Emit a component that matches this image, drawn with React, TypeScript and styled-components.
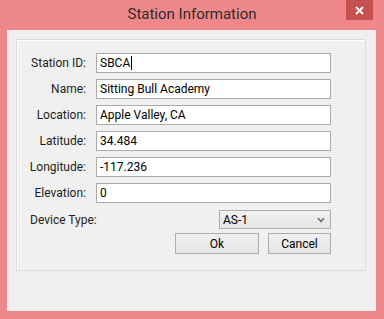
import React from 'react';
import styled, { createGlobalStyle } from 'styled-components';

const GlobalStyle = createGlobalStyle`
  html, body {
    margin: 0;
    padding: 0;
  }
  body {
    width: 384px;
    height: 319px;
    overflow: hidden;
    font-family: Roboto, "Noto Sans", sans-serif;
  }
`;

const Window = styled.div`
  width: 384px;
  height: 319px;
  box-sizing: border-box;
  background-color: #ef888b;
  display: flex;
  flex-direction: column;
`;

const TitleBar = styled.div`
  height: 30px;
  display: grid;
  grid-template-columns: 1fr auto 1fr;
  align-items: start;
`;

const Title = styled.div`
  grid-column: 2;
  padding-top: 5px;
  font-size: 15px;
  color: #2e2a2a;
`;

const CloseButton = styled.div`
  grid-column: 3;
  justify-self: end;
  width: 27px;
  height: 20px;
  margin-right: 11px;
  background-color: #c75050;
  display: flex;
  align-items: center;
  justify-content: center;
`;

const Client = styled.div`
  flex: 1;
  margin: 0 8px 8px 7px;
  background-color: #f0f0f0;
  padding: 9px 10px 40px 9px;
  box-sizing: border-box;
  display: flex;
`;

const GroupBox = styled.div`
  flex: 1;
  border: 1px solid #dcdcdc;
  box-shadow: inset 1px 1px 0 #ffffff;
  box-sizing: border-box;
  padding: 13px 34px 0 0;
  display: flex;
  flex-direction: column;
`;

const FieldGrid = styled.div`
  display: grid;
  grid-template-columns: 69px 1fr;
  column-gap: 10px;
  row-gap: 6px;
  align-items: center;
`;

const Label = styled.div`
  font-size: 12px;
  color: #1e1e1e;
  text-align: right;
  white-space: nowrap;
`;

const Field = styled.div`
  height: 20px;
  box-sizing: border-box;
  border: 1px solid #ababab;
  background-color: #ffffff;
  padding: 0 3px;
  font-size: 12px;
  line-height: 18px;
  color: #000000;
  display: flex;
  align-items: center;
  white-space: nowrap;
`;

const Caret = styled.span`
  display: inline-block;
  width: 1px;
  height: 14px;
  background-color: #000;
  margin-left: 1px;
`;

const DeviceRow = styled.div`
  margin-top: 7px;
  padding-left: 13px;
  display: flex;
  justify-content: space-between;
  align-items: center;
`;

const DeviceLabel = styled(Label)`
  text-align: left;
`;

const Select = styled.div`
  width: 112px;
  height: 19px;
  box-sizing: border-box;
  border: 1px solid #acacac;
  background: linear-gradient(#f2f2f2, #e5e5e5);
  padding: 0 5px 0 3px;
  font-size: 12px;
  color: #000;
  display: flex;
  align-items: center;
  justify-content: space-between;
`;

const ButtonRow = styled.div`
  margin-top: 4px;
  display: flex;
  justify-content: flex-end;
  gap: 9px;
`;

const Button = styled.div<{ $width: number }>`
  width: ${(p) => p.$width}px;
  height: 21px;
  box-sizing: border-box;
  border: 1px solid #acacac;
  background: linear-gradient(#f0f0f0, #e5e5e5);
  font-size: 12px;
  color: #000;
  display: flex;
  align-items: center;
  justify-content: center;
`;

const fields = [
  { label: 'Station ID:', value: 'SBCA', caret: true },
  { label: 'Name:', value: 'Sitting Bull Academy' },
  { label: 'Location:', value: 'Apple Valley, CA' },
  { label: 'Latitude:', value: '34.484' },
  { label: 'Longitude:', value: '-117.236' },
  { label: 'Elevation:', value: '0' },
];

export default function App() {
  return (
    <>
      <GlobalStyle />
      <Window>
        <TitleBar>
          <Title>Station Information</Title>
          <CloseButton>
            <svg width="9" height="9" viewBox="0 0 9 9">
              <path d="M1 1 L8 8 M8 1 L1 8" stroke="#ffffff" strokeWidth="1.8" />
            </svg>
          </CloseButton>
        </TitleBar>
        <Client>
          <GroupBox>
            <FieldGrid>
              {fields.map((f) => (
                <React.Fragment key={f.label}>
                  <Label>{f.label}</Label>
                  <Field>
                    {f.value}
                    {f.caret && <Caret />}
                  </Field>
                </React.Fragment>
              ))}
            </FieldGrid>
            <DeviceRow>
              <DeviceLabel>Device Type:</DeviceLabel>
              <Select>
                <span>AS-1</span>
                <svg width="8" height="6" viewBox="0 0 8 6">
                  <path d="M1 1 L4 4.5 L7 1" fill="none" stroke="#6d6d6d" strokeWidth="1.5" />
                </svg>
              </Select>
            </DeviceRow>
            <ButtonRow>
              <Button $width={84}>Ok</Button>
              <Button $width={63}>Cancel</Button>
            </ButtonRow>
          </GroupBox>
        </Client>
      </Window>
    </>
  );
}
